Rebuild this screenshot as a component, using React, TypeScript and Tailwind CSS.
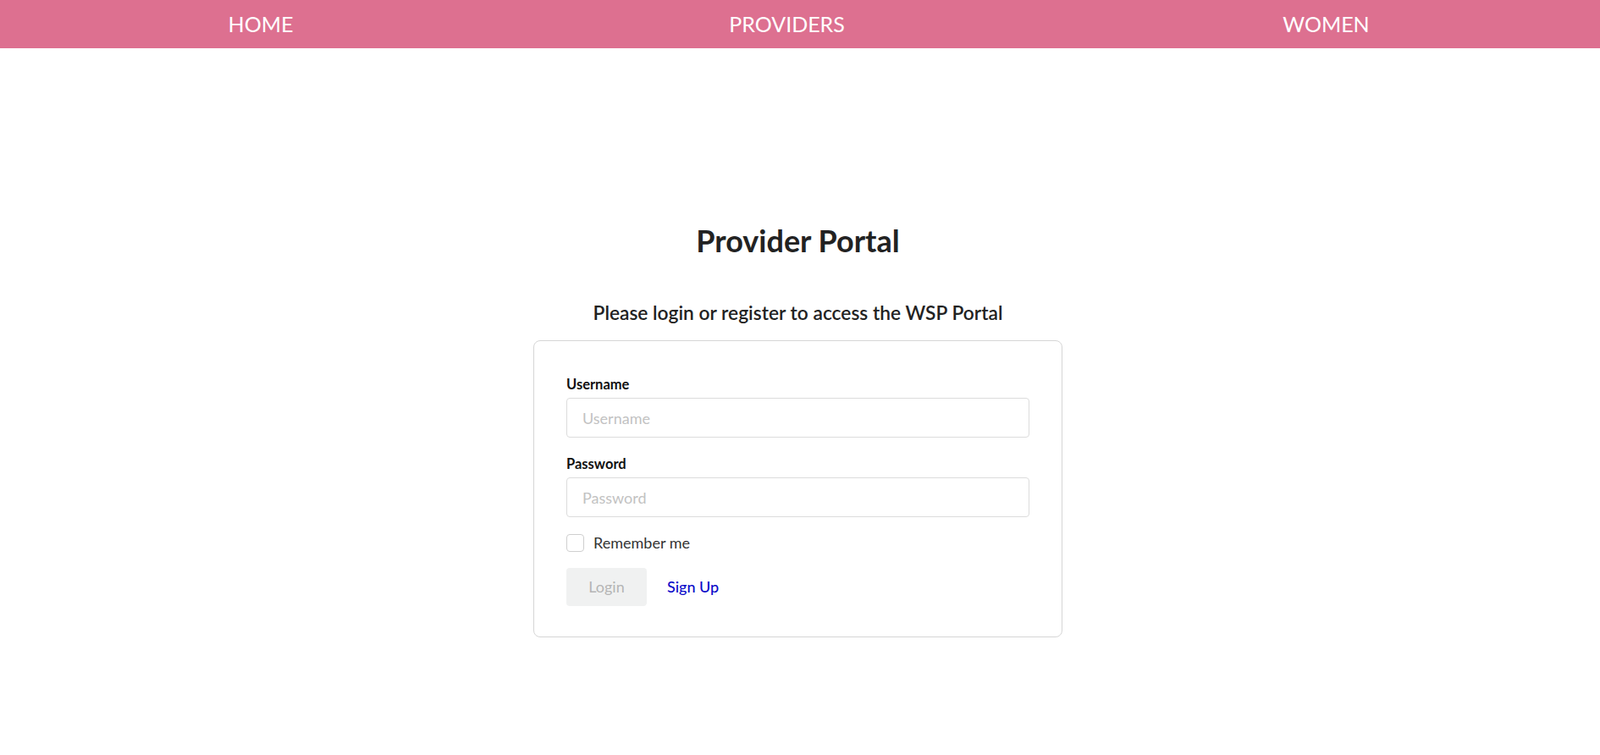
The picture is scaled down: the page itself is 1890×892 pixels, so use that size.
import React from "react";

export default function App() {
  return (
    <div className="min-h-screen bg-white font-['Lato','Noto_Sans',sans-serif]">
      <nav className="grid h-[57px] grid-cols-[616px_627px_1fr] items-center bg-[#dd7090] text-center text-[25px] text-white">
        <a className="leading-none">HOME</a>
        <a className="leading-none">PROVIDERS</a>
        <a className="leading-none">WOMEN</a>
      </nav>
      <main className="flex flex-col items-center pr-[5px] pt-[206px]">
        <h1 className="text-[36px] font-bold leading-[43px] text-[#222]">Provider Portal</h1>
        <p className="mt-[50px] text-[22.75px] font-semibold leading-[27px] text-[#222]">
          Please login or register to access the WSP Portal
        </p>
        <div className="mt-[19px] w-[625px] rounded-[8px] border border-[#d6d6d6] px-[38px] pb-[36px] pt-[42px]">
          <label className="block text-[16.5px] font-bold leading-[18px] text-[#111]">Username</label>
          <input
            className="mt-[7px] block h-[47px] w-full rounded-[4px] border border-[#dcdcdc] px-[18px] text-[18px] text-[#333] outline-none placeholder:text-[#c2c2c2]"
            placeholder="Username"
          />
          <label className="mt-[22px] block text-[16.5px] font-bold leading-[18px] text-[#111]">Password</label>
          <input
            type="password"
            className="mt-[7px] block h-[47px] w-full rounded-[4px] border border-[#dcdcdc] px-[18px] text-[18px] text-[#333] outline-none placeholder:text-[#c2c2c2]"
            placeholder="Password"
          />
          <div className="mt-[20px] flex h-[21px] items-center gap-[11px]">
            <span className="block h-[21px] w-[21px] rounded-[4px] border border-[#cfcfcf] bg-white" />
            <span className="text-[18px] leading-[21px] text-[#333]">Remember me</span>
          </div>
          <div className="mt-[19px] flex items-center gap-[24px]">
            <button className="h-[45px] w-[95px] rounded-[4px] bg-[#f0f1f1] text-[18px] text-[#b5b5b5]">Login</button>
            <a className="text-[18px] font-medium text-[#0b0bc9]">Sign Up</a>
          </div>
        </div>
      </main>
    </div>
  );
}
